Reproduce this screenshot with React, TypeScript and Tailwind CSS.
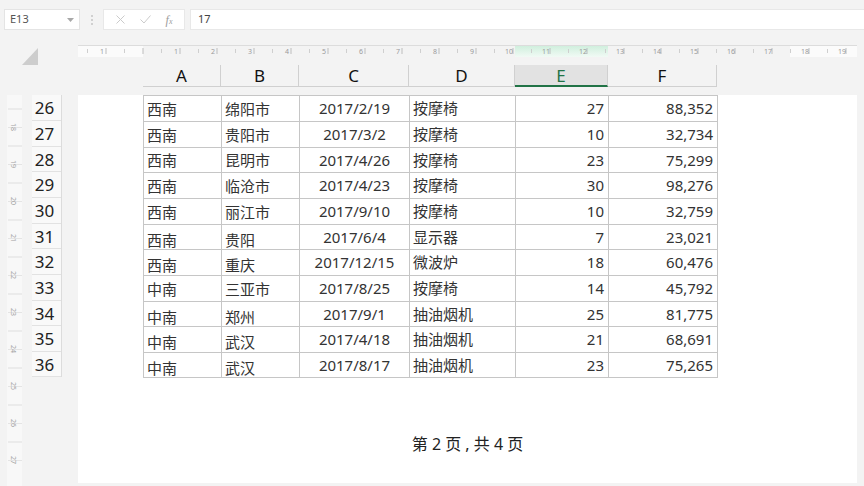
const rows = [
  { n: 26, a: '西南', b: '绵阳市', c: '2017/2/19', d: '按摩椅', e: '27', f: '88,352', h: 26, low: false },
  { n: 27, a: '西南', b: '贵阳市', c: '2017/3/2', d: '按摩椅', e: '10', f: '32,734', h: 26, low: false },
  { n: 28, a: '西南', b: '昆明市', c: '2017/4/26', d: '按摩椅', e: '23', f: '75,299', h: 25, low: false },
  { n: 29, a: '西南', b: '临沧市', c: '2017/4/23', d: '按摩椅', e: '30', f: '98,276', h: 26, low: false },
  { n: 30, a: '西南', b: '丽江市', c: '2017/9/10', d: '按摩椅', e: '10', f: '32,759', h: 26, low: false },
  { n: 31, a: '西南', b: '贵阳', c: '2017/6/4', d: '显示器', e: '7', f: '23,021', h: 25, low: true },
  { n: 32, a: '西南', b: '重庆', c: '2017/12/15', d: '微波炉', e: '18', f: '60,476', h: 26, low: true },
  { n: 33, a: '中南', b: '三亚市', c: '2017/8/25', d: '按摩椅', e: '14', f: '45,792', h: 26, low: false },
  { n: 34, a: '中南', b: '郑州', c: '2017/9/1', d: '抽油烟机', e: '25', f: '81,775', h: 25, low: true },
  { n: 35, a: '中南', b: '武汉', c: '2017/4/18', d: '抽油烟机', e: '21', f: '68,691', h: 26, low: true },
  { n: 36, a: '中南', b: '武汉', c: '2017/8/17', d: '抽油烟机', e: '23', f: '75,265', h: 25, low: true },
]

const cols = [
  { key: 'A', w: 'w-[78px]' },
  { key: 'B', w: 'w-[78px]' },
  { key: 'C', w: 'w-[110px]' },
  { key: 'D', w: 'w-[106px]' },
  { key: 'E', w: 'w-[93px]' },
  { key: 'F', w: 'w-[109px]' },
]

// horizontal ruler, 37px per cm, printable area starts 65px in
function HRuler() {
  const ticks = []
  for (let k = -2; k <= 19; k++) {
    const x = 65 + 37 * k
    if (x > 0 && x < 779) ticks.push(<line key={'M' + k} x1={x} y1={3} x2={x} y2={9} stroke="#bdbdbd" strokeWidth={1} />)
    const m = x + 18.5
    if (m > 0 && m < 779) ticks.push(<line key={'m' + k} x1={m} y1={4} x2={m} y2={8} stroke="#cfcfcf" strokeWidth={1} />)
    const label = k === -1 ? 1 : k >= 1 ? k : null
    if (label !== null && x > 0 && x < 779)
      ticks.push(
        <text key={'t' + k} x={x - 4} y={8.5} fontSize={7} fill="#9a9a9a" textAnchor="middle">
          {label}
        </text>
      )
  }
  return (
    <svg width={779} height={12} className="block">
      <defs>
        <linearGradient id="sel" x1="0" y1="0" x2="0" y2="1">
          <stop offset="0" stopColor="#cdeedb" />
          <stop offset="1" stopColor="#f1faf5" />
        </linearGradient>
      </defs>
      <rect x={0} y={0} width={65} height={12} fill="#fbfbfb" />
      <rect x={712} y={0} width={67} height={12} fill="#fbfbfb" />
      <rect x={437} y={0} width={93} height={12} fill="url(#sel)" />
      <line x1={0} y1={0.5} x2={779} y2={0.5} stroke="#dcdcdc" />
      {ticks}
    </svg>
  )
}

function VRuler() {
  const items = []
  for (let k = 0; k < 10; k++) {
    const y = 14 + 37 * k
    items.push(<line key={'a' + k} x1={8} y1={y} x2={22} y2={y} stroke="#dedede" />)
    items.push(<line key={'b' + k} x1={8} y1={y + 18.5} x2={22} y2={y + 18.5} stroke="#e4e4e4" />)
    items.push(
      <text key={'t' + k} x={0} y={0} fontSize={7} fill="#a3a3a3" textAnchor="middle" transform={`translate(10.5 ${y + 18}) rotate(90)`}>
        {18 + k}
      </text>
    )
  }
  return (
    <svg width={22} height={391} className="block">
      <rect x={7} y={0} width={15} height={391} fill="#f8f8f8" />
      {items}
    </svg>
  )
}

function Toolbar() {
  return (
    <div className="h-[37px] flex items-start pt-[9px] pl-[4px] text-[11px] text-[#555]">
      <div className="w-[76px] h-[21px] bg-white border border-[#e4e4e4] flex items-center justify-between pl-[5px] pr-[5px]">
        <span>E13</span>
        <svg width={7} height={4} viewBox="0 0 7 4">
          <path d="M0 0 L7 0 L3.5 4 Z" fill="#a8a8a8" />
        </svg>
      </div>
      <div className="w-[23px] h-[21px] flex flex-col items-center justify-center gap-[2px]">
        <span className="w-[2px] h-[2px] bg-[#d0d0d0]" />
        <span className="w-[2px] h-[2px] bg-[#d0d0d0]" />
        <span className="w-[2px] h-[2px] bg-[#d0d0d0]" />
      </div>
      <div className="w-[82px] h-[21px] bg-white border border-[#e8e8e8] flex items-center justify-around px-[4px] text-[#c4c4c4]">
        <svg width={9} height={9} viewBox="0 0 9 9">
          <path d="M0.5 0.5 L8.5 8.5 M8.5 0.5 L0.5 8.5" stroke="#cbcbcb" strokeWidth={1} fill="none" />
        </svg>
        <svg width={11} height={9} viewBox="0 0 11 9">
          <path d="M0.5 4.5 L4 8 L10.5 0.5" stroke="#cbcbcb" strokeWidth={1} fill="none" />
        </svg>
        <span className="font-['Liberation_Serif',serif] italic text-[12px] text-[#9c9c9c] leading-none">
          f<span className="text-[8px]">x</span>
        </span>
      </div>
      <div className="flex-1 ml-[5px] h-[21px] bg-white border-y border-l border-[#e8e8e8] flex items-center pl-[7px] text-[#444]">
        17
      </div>
    </div>
  )
}

export default function App() {
  return (
    <div className="w-[864px] h-[486px] overflow-hidden bg-[#f3f3f3] flex flex-col font-['Noto_Sans','Noto_Sans_CJK_SC',sans-serif]">
      <Toolbar />
      <div className="flex flex-1 min-h-0">
        <div className="w-[78px] flex flex-col">
          <div className="h-[58px] pt-[11px] pl-[22px]">
            <svg width={16} height={17} viewBox="0 0 16 17">
              <path d="M16 0 L16 17 L0 17 Z" fill="#cdcdcd" />
            </svg>
          </div>
          <div className="flex flex-1 min-h-0">
            <VRuler />
            <div className="ml-[10px] w-[30px] flex flex-col self-start bg-[#f9f9f9] border-r border-[#dcdcdc]">
              {rows.map((r) => (
                <div
                  key={r.n}
                  className={`${r.h === 26 ? 'h-[26px]' : 'h-[25px]'} flex items-center justify-center pr-[4px] border-b border-[#e2e2e2] text-[17px] text-[#222] leading-none`}
                >
                  {r.n}
                </div>
              ))}
            </div>
          </div>
        </div>
        <div className="flex-1 flex flex-col">
          <div className="mt-[8px] h-[12px]">
            <HRuler />
          </div>
          <div className="mt-[8px] h-[22px] pl-[65px] flex">
            {cols.map((c) =>
              c.key === 'E' ? (
                <div key={c.key} className={`${c.w} bg-[#e2e2e2] border-b-2 border-[#217346] border-r border-r-[#d0d0d0] flex items-center justify-center text-[17px] text-[#217346] leading-none`}>
                  {c.key}
                </div>
              ) : (
                <div key={c.key} className={`${c.w} border-b border-r border-[#d0d0d0] flex items-center justify-center text-[17px] text-[#111] leading-none`}>
                  {c.key}
                </div>
              )
            )}
          </div>
          <div className="mt-[8px] w-[779px] h-[388px] bg-white flex flex-col">
            <div className="ml-[65px] flex flex-col border-t border-l border-[#c6c6c6] w-[575px] text-[15px] text-[#333] leading-none">
              {rows.map((r) => (
                <div key={r.n} className={`${r.h === 26 ? 'h-[26px]' : 'h-[25px]'} flex border-b border-[#c6c6c6]`}>
                  <div className={`w-[78px] border-r border-[#c6c6c6] flex items-center pl-[3px] ${r.low ? 'pt-[6px]' : 'pt-[1px]'}`}>{r.a}</div>
                  <div className={`w-[78px] border-r border-[#c6c6c6] flex items-center pl-[3px] ${r.low ? 'pt-[6px]' : 'pt-[1px]'}`}>{r.b}</div>
                  <div className="w-[110px] border-r border-[#c6c6c6] flex items-center justify-center">{r.c}</div>
                  <div className="w-[106px] border-r border-[#c6c6c6] flex items-center pl-[3px]">{r.d}</div>
                  <div className="w-[93px] border-r border-[#c6c6c6] flex items-center justify-end pr-[4px]">{r.e}</div>
                  <div className="w-[109px] border-r border-[#c6c6c6] flex items-center justify-end pr-[4px]">{r.f}</div>
                </div>
              ))}
            </div>
            <div className="mt-[55px] text-center text-[16px] text-[#222] leading-[22px]">第 2 页 , 共 4 页</div>
          </div>
        </div>
      </div>
    </div>
  )
}
